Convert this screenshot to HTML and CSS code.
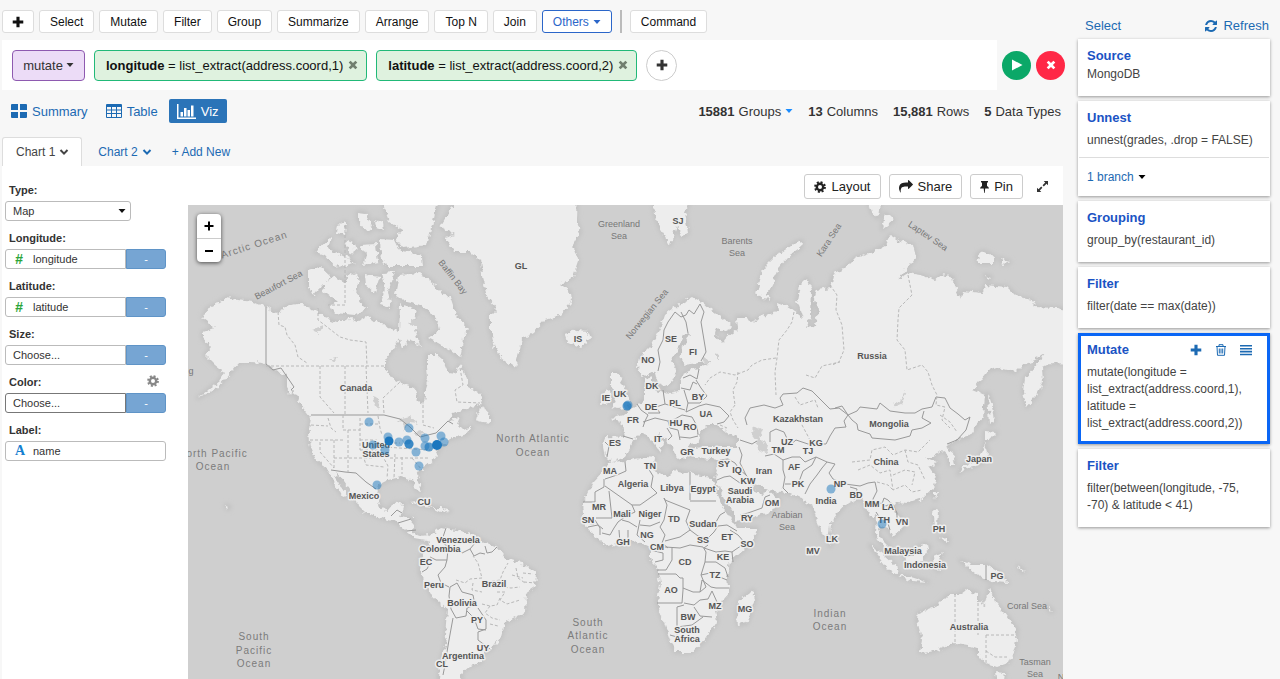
FILE: index.html
```html
<!DOCTYPE html>
<html lang="en">
<head>
<meta charset="UTF-8">
<meta name="viewport" content="width=device-width, initial-scale=1">
<title>Restaurants - Mutate</title>
<link rel="stylesheet" href="styles.css">
</head>

<body>

<!-- shared icons -->
<svg class="symbols" aria-hidden="true">
	<symbol id="plus" viewBox="0 0 10 10"><path d="M3.7 .6h2.6v3.1h3.1v2.6H6.3v3.1H3.7V6.3H.6V3.7h3.1z"/></symbol>
	<symbol id="times" viewBox="0 0 10 10"><path d="M2.6.7 5 3.1 7.4.7l1.9 1.9L6.9 5l2.4 2.4-1.9 1.9L5 6.9 2.6 9.3.7 7.4 3.1 5 .7 2.6z"/></symbol>
	<symbol id="caret" viewBox="0 0 8 4"><path d="M.5 0h7L4 4z"/></symbol>
	<symbol id="chevron" viewBox="0 0 10 8"><path d="M1.5 2 5 5.6 8.5 2" fill="none" stroke="currentColor" stroke-width="2"/></symbol>
	<symbol id="cog" viewBox="0 0 12 12"><circle cx="6" cy="6" r="3.2" fill="none" stroke="currentColor" stroke-width="2.4"/><circle cx="6" cy="6" r="4.9" fill="none" stroke="currentColor" stroke-width="2" stroke-dasharray="2 1.848"/></symbol>
</svg>

<div class="app">

<main class="main">

	<nav class="toolbar">
		<button class="btn icon" aria-label="Add"><svg class="i12"><use href="#plus"/></svg></button>
		<button class="btn">Select</button>
		<button class="btn">Mutate</button>
		<button class="btn">Filter</button>
		<button class="btn">Group</button>
		<button class="btn">Summarize</button>
		<button class="btn">Arrange</button>
		<button class="btn">Top N</button>
		<button class="btn">Join</button>
		<button class="btn active">Others <svg class="caret"><use href="#caret"/></svg></button>
		<span class="divider"></span>
		<button class="btn">Command</button>
	</nav>

	<div class="command">
		<div class="command-bar">
			<button class="verb">mutate <svg class="caret"><use href="#caret"/></svg></button>
			<div class="token"><span><b>longitude</b> = list_extract(address.coord,1)</span><button aria-label="Remove longitude"><svg class="i10"><use href="#times"/></svg></button></div>
			<div class="token"><span><b>latitude</b> = list_extract(address.coord,2)</span><button aria-label="Remove latitude"><svg class="i10"><use href="#times"/></svg></button></div>
			<button class="round add" aria-label="Add column"><svg class="i12"><use href="#plus"/></svg></button>
		</div>
		<button class="round run" aria-label="Run"><svg class="i12" viewBox="0 0 12 12"><path d="M1 .5v11L11.500 6z"/></svg></button>
		<button class="round cancel" aria-label="Cancel"><svg class="i10"><use href="#times"/></svg></button>
	</div>

	<div class="views">
		<a href="#" class="view"><svg width="16" height="14" viewBox="0 0 16 14"><path d="M0 1q0-1 1-1h6v6H0zM9 0h6q1 0 1 1v5H9zM0 8h7v6H1q-1 0-1-1zM9 8h7v5q0 1-1 1H9z"/></svg>Summary</a>
		<a href="#" class="view"><svg width="16" height="14" viewBox="0 0 16 14"><path fill-rule="evenodd" d="M1 0h14q1 0 1 1v12q0 1-1 1H1q-1 0-1-1V1q0-1 1-1zM1 3v2.500h4V3zm5 0v2.500h4V3zm5 0v2.500h4V3zM1 6.500V9h4V6.500zm5 0V9h4V6.500zm5 0V9h4V6.500zM1 10v3h4v-3zm5 0v3h4v-3zm5 0v3h4v-3z"/></svg>Table</a>
		<a href="#" class="view on"><svg width="19" height="15" viewBox="0 0 19 15"><path d="M0 0h1.500v13.500H19V15H0zM3.500 8h2.500v4.500H3.500zM7 4h2.500v8.500H7zM10.500 6h2.500v6.500h-2.500zM14 1.500h2.500v11H14z"/></svg>Viz</a>
		<ul class="stats">
			<li><b>15881</b> Groups <svg class="caret"><use href="#caret"/></svg></li>
			<li><b>13</b> Columns</li>
			<li><b>15,881</b> Rows</li>
			<li><b>5</b> Data Types</li>
		</ul>
	</div>

	<div class="tabs">
		<a href="#" class="tab on">Chart 1 <svg class="i10"><use href="#chevron"/></svg></a>
		<a href="#" class="tab">Chart 2 <svg class="i10"><use href="#chevron"/></svg></a>
		<a href="#" class="tab">+ Add New</a>
	</div>

	<section class="panel">

		<form class="settings">
			<div class="field short">
				<label for="type">Type:</label>
				<div class="control"><select id="type"><option>Map</option></select><svg class="caret"><use href="#caret"/></svg></div>
			</div>
			<div class="field">
				<label for="lon">Longitude:</label>
				<div class="control"><span class="num">#</span><select id="lon" class="with-icon"><option>longitude</option></select><button type="button">-</button></div>
			</div>
			<div class="field">
				<label for="lat">Latitude:</label>
				<div class="control"><span class="num">#</span><select id="lat" class="with-icon"><option>latitude</option></select><button type="button">-</button></div>
			</div>
			<div class="field">
				<label for="size">Size:</label>
				<div class="control"><select id="size"><option>Choose...</option></select><button type="button">-</button></div>
			</div>
			<div class="field">
				<div class="label-row"><label for="color">Color:</label><svg class="i12"><use href="#cog"/></svg></div>
				<div class="control"><select id="color" class="dark"><option>Choose...</option></select><button type="button">-</button></div>
			</div>
			<div class="field">
				<label for="label">Label:</label>
				<div class="control"><span class="chr">A</span><select id="label" class="with-icon full"><option>name</option></select></div>
			</div>
		</form>

		<div class="chart">
			<div class="actions">
				<button class="action"><svg class="i12"><use href="#cog"/></svg>Layout</button>
				<button class="action"><svg width="14" height="13" viewBox="0 128 1792 1536"><path d="M1792 640q0 26-19 45l-512 512q-19 19-45 19t-45-19-19-45v-256h-224q-98 0-175.500 6t-154 21.500-133 42.500-105.500 69.500-80 101-48.500 138.500-17.500 181q0 55 5 123 0 6 2.500 23.500t2.500 26.500q0 15-8.500 25t-23.500 10q-16 0-28-17-7-9-13-22t-13.500-30-10.500-24q-127-285-127-451 0-199 53-333 162-403 875-403h224v-256q0-26 19-45t45-19 45 19l512 512q19 19 19 45z"/></svg>Share</button>
				<button class="action"><svg width="9" height="12" viewBox="0 0 9 12"><path d="M1 0h7v1.500H7V5q1.700.8 2 2.600H5.200L4.700 12h-.5l-.5-4.400H0Q.3 5.800 2 5V1.500H1z"/></svg>Pin</button>
				<button class="expand" aria-label="Expand"><svg width="11" height="11" viewBox="0 0 11 11"><path d="M11 0v4.300L9.500 2.800 6.800 5.500l-1.200-1.200 2.600-2.700L6.700 0zM0 11V6.700l1.500 1.500 2.700-2.700 1.200 1.200-2.600 2.700L4.300 11z"/></svg></button>
			</div>

			<div class="map">
				<svg class="world" viewBox="188 205 875 474" preserveAspectRatio="xMidYMid slice" role="img" aria-label="World map">
					<defs>
						<filter id="coast">
							<feTurbulence type="fractalNoise" baseFrequency="0.2" numOctaves="2" seed="4" result="n"/>
							<feDisplacementMap in="SourceGraphic" in2="n" scale="7" xChannelSelector="R" yChannelSelector="G"/>
						</filter>
						<filter id="soft"><feGaussianBlur stdDeviation="2"/></filter>
						<g id="land">
							<!-- north and central america -->
							<path d="M228 297 238 300 253 302 266 307 275 313 288 306 300 303 308 308 318 312 325 318 336 322 345 322 352 318 358 321 368 316 376 322 384 324 392 328 398 332 402 326 408 324 409 330 401 338 393 348 385 360 385 368 391 378 401 383 415 388 418 401 423 405 425 397 425 387 428 378 427 368 427 355 437 355 443 360 448 372 455 373 460 365 465 375 468 387 478 392 483 398 480 405 467 408 453 413 448 422 455 418 460 417 457 424 463 430 472 427 467 434 450 439 446 442 440 447 436 455 430 463 421 470 417 476 421 486 420 492 416 489 413 481 401 477 388 480 378 485 376 495 380 507 388 510 393 504 404 503 402 510 400 517 413 519 412 533 421 536 428 535 432 541 426 540 415 538 405 530 396 522 381 518 365 512 358 505 356 497 345 482 335 473 339 484 347 496 344 497 335 485 328 470 316 460 310 447 308 435 311 418 303 408 293 392 285 375 275 370 263 363 251 362 240 362 231 372 218 387 198 398 218 382 225 373 215 365 205 355 211 348 203 338 203 332 215 328 203 318 207 309 215 305z"/>
							<path d="M308 270 320 266 331 276 322 285 313 296 308 285zM323 282 335 277 345 283 350 273 360 277 355 292 366 308 355 315 335 313 330 305 336 300 323 290zM365 275 380 277 375 293 366 285zM382 273 395 272 388 292 391 308 380 305 385 288zM315 252 331 237 328 248 348 258 355 263 335 267 325 255zM338 225 346 222 345 235 337 233zM358 212 366 213 373 228 368 232 358 220zM376 220 382 223 383 230 377 228zM346 244 352 240 356 250 350 254zM360 245 376 244 378 262 363 265 366 255zM380 239 395 240 400 250 422 256 423 266 386 266 381 254zM381 190 440 190 433 222 427 245 403 248 395 238 403 230 390 222 386 212z"/>
							<path d="M399 275 420 273 433 282 437 290 450 297 455 312 463 323 469 330 463 337 462 348 460 358 450 350 438 343 428 338 440 330 438 322 430 312 420 305 407 302 395 295zM400 305 417 310 413 322 420 345 408 340 403 348 399 334zM482 405 490 417 490 423 483 422 476 420 478 412zM286 377 292 385 290 395 286 388zM410 501 420 500 433 507 424 506zM432 508 441 508 450 511 440 512zM226 505l4 2-2 2z"/>
							<!-- greenland, iceland, svalbard -->
							<path d="M462 190 440 227 455 235 445 238 455 252 472 252 480 260 483 282 488 298 497 308 490 315 490 328 495 348 503 360 515 367 518 357 523 338 533 333 545 320 560 315 571 303 570 292 560 285 573 277 578 262 573 245 580 232 576 220 577 190zM565 333 577 330 588 331 591 338 580 347 568 342zM653 190 693 190 685 213 688 233 682 237 677 225 670 245 660 228 655 215z"/>
							<!-- eurasia -->
							<path d="M605 437 625 438 623 425 612 418 624 415 632 410 640 402 645 398 645 385 645 378 652 376 652 388 657 390 670 393 680 391 680 382 683 373 690 370 698 368 713 362 698 363 683 365 681 352 687 340 690 334 683 335 678 350 671 360 677 369 672 382 663 388 657 378 655 370 643 377 638 368 640 357 652 345 660 330 665 315 678 305 693 297 703 303 712 310 723 318 732 325 728 332 717 328 715 335 722 343 727 337 738 328 737 317 747 317 750 322 765 315 778 312 777 303 790 308 803 318 797 300 800 285 807 278 812 290 811 315 806 328 815 326 818 310 814 300 817 290 830 288 833 275 845 268 855 258 872 252 885 245 890 235 898 240 913 245 916 257 903 273 897 280 908 273 920 275 935 280 943 274 953 277 956 290 960 299 963 291 982 293 985 285 1007 287 1017 297 1032 300 1035 307 1057 308 1075 312 1075 364 1052 363 1042 368 1043 382 1035 398 1027 407 1023 392 1025 378 1035 367 1045 353 1035 360 1022 365 1015 372 998 368 988 370 973 390 985 395 983 418 968 437 957 440 945 447 953 453 955 465 950 465 948 455 942 450 932 457 925 457 938 463 930 467 937 477 933 488 922 498 908 503 897 502 892 508 902 520 903 528 893 537 888 528 880 525 878 535 888 545 893 554 885 548 875 535 876 515 870 518 867 510 862 497 855 500 848 502 838 513 830 523 829 535 824 537 817 520 812 503 807 505 802 497 782 492 768 490 755 483 748 480 753 490 763 495 768 490 780 500 772 512 758 515 737 522 733 513 725 500 717 483 715 478 720 460 702 458 688 455 690 449 702 447 738 447 738 438 727 433 718 425 707 425 698 435 700 442 687 445 686 458 680 460 674 451 668 442 660 433 657 436 664 444 660 452 652 441 645 434 637 436 632 445 625 457 613 462 605 457 603 447z"/>
							<path d="M612 372 618 372 622 382 630 402 628 408 617 409 612 407 615 398 612 385zM602 395 610 390 611 402 601 404zM802 241 801 248 788 257 778 268 773 283 767 295 771 300 762 299 757 293 760 280 766 265 775 256 788 248 797 242zM867 195 881 195 878 218 872 213zM885 213 894 220 882 229zM977 255 983 251 995 257 992 263 978 263zM1000 258 1010 262 1003 264zM985 275l6 2-3 3zM988 393 992 405 994 422 990 425zM985 432 997 433 992 438 985 440zM985 443 988 453 984 461 973 467 962 470 958 474 962 467 976 461 982 454zM933 492 937 492 935 500zM829 538 833 541 830 546z"/>
							<!-- africa -->
							<path d="M608 462 625 461 645 457 655 458 653 470 668 477 675 470 688 473 713 477 713 483 723 507 737 528 757 528 752 543 730 562 727 577 729 593 715 610 717 622 705 640 692 652 675 652 670 640 657 603 660 583 657 567 650 560 650 548 640 543 630 540 608 547 595 537 585 525 583 503 593 483 605 470zM753 590 755 600 747 623 738 625 737 613 740 600z"/>
							<!-- south america -->
							<path d="M428 537 441 527 471 533 481 540 498 548 505 558 521 563 536 573 535 587 526 593 525 613 505 623 501 637 490 650 481 653 481 662 468 667 461 673 463 690 438 690 440 665 445 647 448 610 433 597 420 573 421 557 430 543z"/>
							<!-- oceania -->
							<path d="M917 620 918 613 938 605 948 595 958 595 965 590 977 593 977 602 985 605 990 587 995 602 1005 613 1017 630 1015 647 1008 663 997 667 985 663 977 653 977 648 968 645 955 643 938 650 925 653 920 652 922 640zM995 672 1005 673 1003 685 997 685zM960 560 972 565 987 565 998 572 1008 583 992 582 987 580 975 573zM905 555 925 543 930 547 920 563 907 567zM870 545 882 553 895 565 897 575 887 568 877 555zM897 575 912 577 928 582 912 581zM933 557 943 553 938 562 939 571 934 566zM933 510 938 512 937 525 944 530 935 525zM940 538 948 537 948 544zM1046 605l7 6-2 1zM1018 566l6 5-2 1z"/>
						</g>
					</defs>

					<rect class="sea" x="0" y="0" width="1300" height="900"/>
					<use href="#land" class="shelf" filter="url(#soft)"/>
					<g filter="url(#coast)">
						<use href="#land" class="land"/>
						<!-- lakes and inland seas -->
						<path class="sea" d="M750 432 757 427 763 430 760 438 768 446 766 453 758 450 756 440zM398 420 410 417 418 424 408 423 404 432 402 424zM414 432l8-1 3 4-9 1zM311 330l12-4-4 8zM328 360l12-3-5 5zM372 396l6 2 1 10-4-2zM702 358l5-1 1 6-4 1zM715 353l3 1v6h-3zM893 405l8-4 5-13-3 14-7 5zM408 322l12-5 6 8-8 6z"/>
					</g>

					<path class="border" d="M266 307V364L273 370 281 368 294 387 291 390M311 415H384L400 419 410 427 420 437 436 433 448 421 453 424M331 470 345 472 356 473 366 482 376 489M391 516 397 510 402 513M398 523 411 519M407 531 416 530M446 528 443 537 445 545 457 548 462 553 470 549 475 543 481 541M448 549 447 560 436 560 430 557M447 560 445 567 438 575 441 583 449 587M450 587 457 583 462 592 473 595 475 605 467 608 466 616 456 618 451 609 449 596 450 587M478 608 486 620 486 629 478 632 478 640 490 649M467 611 474 618 478 629 486 630M453 618 449 640 447 652 445 665 443 675M485 546 487 553 492 552 497 547M470 549 474 556 480 553 485 554M422 572 427 569 430 563"/>
					<path class="border" d="M658 371 660 362 658 350 663 340 664 330 668 322 675 312 681 317 686 315 689 310 694 314 700 304 704 312 701 322 704 340 706 352 701 361M681 312 686 322 688 333M683 378 690 375 697 379 699 369M681 388 690 390 693 382 697 384M696 380 701 388 707 396 700 403 688 403 684 390M663 390 665 404 656 407 660 413 648 413M665 404 675 407 685 410M688 403 686 412 699 406 706 404 720 407 729 416 724 422 717 424M637 404 641 410 648 415 645 421 643 427M643 422 655 418 668 421 675 419 682 415 692 417 697 426 698 434M668 421 670 428 678 430 680 440M680 437 690 438 698 436M667 428 672 436 668 440M605 442 609 446 607 457M623 436 633 439M747 425 745 418 750 408 764 405 775 408 783 405 780 398 783 394 797 393 803 388 812 391 822 401 830 409 839 408 848 415 844 421 846 427 835 428 830 436 826 444 808 444 796 440 790 445 784 432 776 429 770 432 770 442M740 440 752 444 757 441M739 447 742 455 740 463 746 475 752 482M765 456 774 454 783 460 783 470 785 477 783 488 788 493M783 460 792 457 800 457 805 462 816 457 812 465 803 471 800 479 797 484 785 484M816 457 827 462 822 468 817 475 810 484 805 494M720 460 728 459 735 463 740 470 746 475M717 480 724 477 730 476 740 483 747 484M740 515 748 513 762 508 765 497 770 495M835 408 842 406 848 415 857 411 860 407 877 409 880 403 890 411 905 413 915 413 922 409 932 407 936 397 945 398 950 408 958 414 965 420 970 417 966 430 957 440 947 444M848 415 852 420 857 424 858 430 870 434 872 438 895 440 910 436 912 430 922 428 931 423 922 418 924 411M827 462 835 464 829 473 833 479 845 484 860 486 868 483 875 482 877 491 873 499 873 507 881 503 886 506 892 503 897 513 897 521M876 512 880 518 887 520 890 530M850 487 857 489 855 499 850 497M882 504 884 498 888 500 895 508M986 565V580M905 556 914 555 920 549"/>
					<path class="border" d="M625 462 626 471 617 475 605 479M604 479V487L595 492V502H583M605 486 632 505 640 505 657 493 651 487 653 476 648 468M609 491 612 518H596M632 505 635 512 626 516 618 522 614 528 610 535 602 533M690 472V500M690 501H716M664 498 665 500 690 510M664 498 667 505 664 520 660 527 665 535 662 543 668 548M690 510 686 521 690 530 680 537 665 541M690 530 698 536 708 538 714 532 718 526M713 528 716 522 720 515 725 512M708 545 704 548 716 552 725 551 732 552 733 562M732 552 745 543 738 535 730 530M718 526 727 525 737 531M640 520 637 535 645 542M640 525 650 526 660 522M622 520 629 522 637 527M620 543 619 530M628 541 628 530M665 547 680 548 690 545 703 547M672 548 672 560 666 570 657 570M650 550 663 553 663 560 655 562M703 547 706 552 705 562 701 575 706 587 700 592M705 562 716 562M701 575 710 573 727 580M658 574 676 574 680 578 683 578V590L682 603 657 603M683 588 693 592 700 592 702 580 711 587 716 588 729 588M684 603 694 605 700 600 708 599 712 591 717 602 708 609M694 607 700 616 712 617M677 627V607L684 605M677 627 692 625 703 617M677 627V637L670 635M716 562 725 568 728 577M595 520 600 528 600 535M588 527 598 525 603 529M594 524 583 523"/>
					<path class="region" d="M278 312 279 325 285 327 287 335 295 345 298 357 307 363M318 308V320L322 323 340 337 350 340 366 342 367 366M266 366H385M320 366V397L334 413M345 366V415M366 366 368 413M384 413 383 398 400 382M460 368 463 385 455 390 457 402 480 403M423 405V425L434 428M328 418 331 428 336 432M311 425 328 426M343 415V430M343 430H360M360 418V450M360 424H380M360 440H377M378 416 380 428 382 435M310 440H345M320 442V452L334 468M334 440V470M348 430V472M334 458H372M360 450H382M363 455 366 465 384 467M382 455 388 466 387 478M395 454 394 478M402 457V474M384 443H400M384 447 430 450M390 458H430M412 458 422 470M345 225V305H328"/>
					<path class="region" d="M794 312 792 322 787 330 779 340 777 358 775 372 776 395M776 358 762 360 752 365 748 370 735 375 720 372 710 378 705 385M738 372 737 382 733 390 735 405M806 375 815 378 822 366 840 362M830 285 837 295 836 310 842 325 844 350 839 362 832 365M908 275 912 295 899 308 898 320 897 340 905 350 907 370 922 365 928 372 932 385 937 395 936 405 945 407 942 420 950 428M795 397 800 405 815 400 818 408M800 415 802 425 810 440M852 462 870 460 872 450 885 447 893 455 905 450 918 452 930 440M858 470 870 465 880 473 890 470 893 490 905 485 912 492 922 490M905 450 908 462 918 465 925 480M893 475 905 470 915 472 912 485M877 482 888 485 893 490M940 415 950 422 957 432M955 594V644M978 603V635M986 635 1016 635M986 635V663M986 651 995 657 1007 657M456 580 465 583 470 579 482 578 478 563 473 556M482 583 500 580 503 572 508 563M473 583 472 590 482 592M500 580 502 587 511 588 520 587M497 592 505 592 500 600 507 604 520 600M482 604 490 606 497 605 500 598M490 606 485 613 492 618 500 620M516 568 518 578 525 583M523 573 533 574M512 575 523 578M524 582 535 583M490 624 498 626M735 405 730 412 733 420 738 428M720 425 727 428"/>

					<g class="ocean">
						<text x="254" y="248" transform="rotate(-18 254 244)">Arctic Ocean</text>
						<text x="533" y="442">North Atlantic</text><text x="533" y="456">Ocean</text>
						<text x="213" y="457">North Pacific</text><text x="213" y="470">Ocean</text>
						<text x="254" y="640">South</text><text x="254" y="654">Pacific</text><text x="254" y="667">Ocean</text>
						<text x="588" y="626">South</text><text x="588" y="639">Atlantic</text><text x="588" y="653">Ocean</text>
						<text x="830" y="617">Indian</text><text x="830" y="630">Ocean</text>
					</g>
					<g class="sea-name">
						<text x="278" y="288" transform="rotate(-28 278 284)">Beaufort Sea</text>
						<text x="453" y="280" transform="rotate(52 453 277)">Baffin Bay</text>
						<text x="647" y="317" transform="rotate(-51 647 314)">Norwegian Sea</text>
						<text x="829" y="243" transform="rotate(-57 829 240)">Kara Sea</text>
						<text x="928" y="239" transform="rotate(34 928 236)">Laptev Sea</text>
						<text x="619" y="227">Greenland</text><text x="619" y="239">Sea</text>
						<text x="737" y="244">Barents</text><text x="737" y="256">Sea</text>
						<text x="787" y="518">Arabian</text><text x="787" y="530">Sea</text>
						<text x="1027" y="609">Coral Sea</text>
						<text x="1035" y="665">Tasman</text><text x="1035" y="677">Sea</text>
						<text x="191" y="374">g</text><text x="1061" y="680">N</text>
					</g>
					<g class="country">
						<text x="356" y="391">Canada</text><text x="376" y="448">United</text><text x="376" y="457">States</text>
						<text x="364" y="499">Mexico</text><text x="424" y="505">CU</text><text x="521" y="269">GL</text><text x="578" y="342">IS</text>
						<text x="458" y="543">Venezuela</text><text x="440" y="552">Colombia</text><text x="426" y="565">EC</text><text x="434" y="588">Peru</text>
						<text x="494" y="587">Brazil</text><text x="462" y="606">Bolivia</text><text x="477" y="623">PY</text><text x="483" y="651">UY</text>
						<text x="463" y="659">Argentina</text><text x="442" y="667">CL</text>
						<text x="678" y="224">SJ</text><text x="671" y="342">SE</text><text x="693" y="355">FI</text><text x="648" y="363">NO</text>
						<text x="652" y="389">DK</text><text x="620" y="397">UK</text><text x="606" y="401">IE</text><text x="651" y="410">DE</text>
						<text x="675" y="406">PL</text><text x="698" y="400">BY</text><text x="706" y="417">UA</text><text x="633" y="423">FR</text>
						<text x="676" y="426">HU</text><text x="690" y="430">RO</text><text x="658" y="442">IT</text><text x="615" y="446">ES</text>
						<text x="687" y="455">GR</text><text x="716" y="454">Turkey</text><text x="724" y="467">SY</text><text x="737" y="473">IQ</text>
						<text x="748" y="484">KW</text><text x="764" y="474">Iran</text><text x="778" y="453">TM</text><text x="787" y="445">UZ</text>
						<text x="816" y="446">KG</text><text x="808" y="454">TJ</text><text x="794" y="470">AF</text><text x="798" y="487">PK</text>
						<text x="798" y="422">Kazakhstan</text><text x="872" y="359">Russia</text><text x="889" y="427">Mongolia</text><text x="886" y="465">China</text>
						<text x="979" y="462">Japan</text><text x="840" y="487">NP</text><text x="826" y="504">India</text><text x="856" y="498">BD</text>
						<text x="872" y="507">MM</text><text x="888" y="510">LA</text><text x="884" y="523">TH</text><text x="902" y="525">VN</text>
						<text x="939" y="532">PH</text><text x="832" y="542">LK</text><text x="813" y="554">MV</text><text x="903" y="554">Malaysia</text>
						<text x="925" y="568">Indonesia</text><text x="997" y="579">PG</text><text x="969" y="630">Australia</text>
						<text x="610" y="474">MA</text><text x="633" y="487">Algeria</text><text x="650" y="469">TN</text><text x="672" y="491">Libya</text>
						<text x="703" y="492">Egypt</text><text x="740" y="494">Saudi</text><text x="740" y="503">Arabia</text><text x="772" y="506">OM</text>
						<text x="747" y="521">RY</text><text x="599" y="510">MR</text><text x="588" y="523">SN</text><text x="622" y="517">Mali</text>
						<text x="650" y="517">Niger</text><text x="674" y="522">TD</text><text x="703" y="527">Sudan</text><text x="623" y="545">GH</text>
						<text x="647" y="538">NG</text><text x="657" y="550">CM</text><text x="703" y="543">SS</text><text x="727" y="540">ET</text>
						<text x="747" y="547">SO</text><text x="685" y="565">CD</text><text x="723" y="560">KE</text><text x="715" y="578">TZ</text>
						<text x="671" y="593">AO</text><text x="715" y="609">MZ</text><text x="688" y="620">BW</text><text x="745" y="612">MG</text>
						<text x="687" y="633">South</text><text x="687" y="642">Africa</text>
					</g>

					<g class="dots">
						<circle cx="369" cy="422" r="4.500"/><circle cx="409" cy="428" r="4.500"/><circle cx="388" cy="437" r="4.500"/>
						<circle cx="373" cy="445" r="4.500"/><circle cx="385" cy="450" r="4.500"/><circle cx="399" cy="442" r="4.500"/>
						<circle cx="407" cy="440" r="4.500"/><circle cx="409" cy="444" r="4.500"/><circle cx="425" cy="438" r="4.500"/>
						<circle cx="441" cy="436" r="4.500"/><circle cx="444" cy="442" r="4.500"/><circle cx="416" cy="452" r="4.500"/>
						<circle cx="419" cy="466" r="4.500"/><circle cx="377" cy="485" r="4.500"/><circle cx="425" cy="446" r="4.500"/>
						<circle cx="831" cy="489" r="4.500"/><circle cx="882" cy="524" r="4.500"/><circle cx="628" cy="405" r="4.500"/>
						<circle class="solid" cx="389" cy="441" r="4.500"/><circle class="dense" cx="409" cy="444" r="4.500"/>
						<circle class="dense" cx="429" cy="447" r="4.500"/><circle class="solid" cx="437" cy="445" r="5"/>
						<circle class="dense" cx="627" cy="406" r="4.500"/>
					</g>
				</svg>
				<div class="zoom">
					<button aria-label="Zoom in"><svg class="i10"><path d="M4 .5h2V4h3.500v2H6v3.500H4V6H.5V4H4z"/></svg></button>
					<button aria-label="Zoom out"><svg class="i10"><path d="M1 4h8v2H1z"/></svg></button>
				</div>
			</div>
		</div>
	</section>
</main>

<aside class="steps">
	<div class="steps-head">
		<a href="#">Select</a>
		<a href="#"><svg width="12" height="12" viewBox="0 0 1536 1536"><path d="M1511 928q0 5-1 7-64 268-268 434.500t-478 166.500q-146 0-282.500-55t-243.500-157l-129 129q-19 19-45 19t-45-19-19-45v-448q0-26 19-45t45-19h448q26 0 45 19t19 45-19 45l-137 137q71 66 161 102t187 36q134 0 250-65t186-179q11-17 53-117 8-23 30-23h192q13 0 22.500 9.500t9.500 22.500zm25-800v448q0 26-19 45t-45 19h-448q-26 0-45-19t-19-45 19-45l138-138q-148-137-349-137-134 0-250 65t-186 179q-11 17-53 117-8 23-30 23h-199q-13 0-22.500-9.500t-9.500-22.500v-7q65-268 270-434.500t480-166.500q146 0 284 55.500t245 156.500l130-129q19-19 45-19t45 19 19 45z"/></svg>Refresh</a>
	</div>

	<div class="step source"><h3>Source</h3><p>MongoDB</p></div>
	<div class="step branched">
		<h3>Unnest</h3>
		<p>unnest(grades, .drop = FALSE)</p>
		<a href="#" class="branch">1 branch <svg class="caret"><use href="#caret"/></svg></a>
	</div>
	<div class="step"><h3>Grouping</h3><p>group_by(restaurant_id)</p></div>
	<div class="step"><h3>Filter</h3><p>filter(date == max(date))</p></div>
	<div class="step selected">
		<div class="step-head">
			<h3>Mutate</h3>
			<button aria-label="Add step"><svg class="i12"><use href="#plus"/></svg></button>
			<button aria-label="Delete step"><svg class="i12" viewBox="0 0 12 12"><path d="M1 2.500h10M4 2.500V.7h4v1.800M2 2.500l.5 8.800h7l.5-8.800M4.300 4.500v5M6 4.500v5M7.700 4.500v5" fill="none" stroke="currentColor"/></svg></button>
			<button aria-label="Step menu"><svg class="i12" viewBox="0 0 12 12"><path d="M0 1h12v1.600H0zM0 3.900h12v1.600H0zM0 6.800h12v1.600H0zM0 9.700h12v1.600H0z"/></svg></button>
		</div>
		<p>mutate(longitude = list_extract(address.coord,1), latitude = list_extract(address.coord,2))</p>
	</div>
	<div class="step"><h3>Filter</h3><p>filter(between(longitude, -75, -70) &amp; latitude &lt; 41)</p></div>
</aside>

</div>

</body>
</html>
```

FILE: styles.css
```css
* {
	box-sizing: border-box;
}

body {
	margin: 0;
	background-color: #f7f7f7;
	color: #333;
	font-family: "Liberation Sans", Arial, sans-serif;
	font-size: 13px;
}

button, select {
	font-family: inherit;
	color: inherit;
	cursor: pointer;
}

button {
	display: inline-flex;
	align-items: center;
	justify-content: center;
	padding: 0;
	border: none;
	background: none;
}

a {
	color: #1c6ab3;
	text-decoration: none;
}

svg {
	fill: currentColor;
	flex: none;
}

.symbols {
	position: absolute;
	width: 0;
	height: 0;
}

.i10 { width: 10px; height: 10px; }
.i12 { width: 12px; height: 12px; }
.caret { width: 8px; height: 4px; }

.app {
	display: grid;
	grid-template-columns: minmax(0, 1fr) 215px;
	min-height: 100vh;
}

.main {
	display: flex;
	flex-direction: column;
	padding-left: 2px;
}

/* toolbar */
.toolbar {
	display: flex;
	gap: 5px;
	padding: 10px 0 7px;
}

.btn {
	height: 23px;
	padding: 0 10px;
	gap: 4px;
	border: 1px solid #ddd;
	border-radius: 3px;
	background-color: #fff;
	color: #111;
	font-size: 12px;
}

.btn.icon {
	padding: 0 9px;
}

.btn.active {
	border-color: #2b66c9;
	color: #2b66c9;
}

.divider {
	width: 2px;
	margin: 0 3px;
	background-color: #bbb;
}

/* command line */
.command {
	display: flex;
	align-items: center;
	gap: 5px;
}

.command-bar {
	flex: 1;
	display: flex;
	align-items: center;
	gap: 9px;
	height: 50px;
	padding-left: 10px;
	background-color: #fff;
}

.verb, .token {
	display: flex;
	align-items: center;
	height: 31px;
	border: 1px solid #8e5ab0;
	border-radius: 4px;
	font-size: 13px;
	white-space: nowrap;
}

.verb {
	width: 73px;
	gap: 3px;
	background-color: #ecdcf7;
}

.token {
	gap: 5px;
	padding: 0 8px 0 11px;
	border-color: #21b978;
	background-color: #dff2df;
	color: #111;
}

.token button {
	color: #71806f;
}

.round {
	width: 29px;
	height: 29px;
	border-radius: 50%;
	color: #fff;
}

.round.add {
	width: 31px;
	height: 31px;
	border: 1px solid #ccc;
	color: #333;
}

.round.run {
	background-color: #0ba868;
}

.round.cancel {
	background-color: #ff2846;
}

/* view switch */
.views {
	display: flex;
	align-items: center;
	gap: 4px;
	padding: 9px 4px 0 2px;
}

.view {
	display: flex;
	align-items: center;
	gap: 5px;
	height: 24px;
	padding: 0 7px;
}

.view.on {
	padding: 0 8px;
	border-radius: 2px;
	background-color: #2b74b8;
	color: #fff;
}

.stats {
	display: flex;
	gap: 15px;
	margin: 0 0 0 auto;
	padding: 0;
	list-style: none;
}

.stats li {
	display: flex;
	align-items: center;
	gap: 4px;
}

.stats .caret {
	color: #1a8cff;
}

/* chart tabs */
.tabs {
	display: flex;
	margin: 14px 2px 0 0;
}

.tab {
	display: flex;
	align-items: center;
	gap: 4px;
	height: 29px;
	padding: 0 4px 0 16px;
	font-size: 12px;
}

.tab.on {
	padding: 0 12px 0 13px;
	border: 1px solid #ddd;
	border-bottom: none;
	border-radius: 3px 3px 0 0;
	background-color: #fff;
	color: #444;
}

.panel {
	flex: 1;
	display: flex;
	margin-right: 2px;
	background-color: #fff;
}

/* chart settings */
.settings {
	width: 186px;
	padding: 17px 22px 0 3px;
}

.field {
	margin-bottom: 10px;
}

.field label {
	display: block;
	margin-left: 4px;
	font-size: 11px;
	font-weight: bold;
	line-height: 14px;
}

.label-row {
	display: flex;
	justify-content: space-between;
	padding-right: 7px;
	color: #888;
}

.label-row label {
	color: #333;
}

.control {
	display: flex;
	position: relative;
	margin-top: 4px;
}

.short .control {
	width: 126px;
}

.control select {
	flex: 1;
	min-width: 0;
	height: 20px;
	padding: 0 7px;
	appearance: none;
	border: 1px solid #bbb;
	border-radius: 3px 0 0 3px;
	background-color: #fff;
	font-size: 11px;
}

.control select.with-icon {
	padding-left: 27px;
}

.control select.dark {
	border-color: #777;
}

.control select.full, .short select {
	border-radius: 3px;
}

.control button {
	width: 40px;
	border: 1px solid #5f94c7;
	border-radius: 0 3px 3px 0;
	background-color: #76a5d3;
	color: #fff;
	font-size: 11px;
}

.control .caret {
	position: absolute;
	right: 5px;
	top: 8px;
	color: #111;
}

.num, .chr {
	position: absolute;
	left: 10px;
	top: 2px;
	color: #2ca53a;
	font-size: 14px;
	font-weight: bold;
	font-style: italic;
	line-height: 16px;
}

.chr {
	color: #1580d0;
	font-family: "Liberation Serif", serif;
	font-style: normal;
}

/* chart area */
.chart {
	flex: 1;
	display: flex;
	flex-direction: column;
	min-width: 0;
}

.actions {
	display: flex;
	justify-content: flex-end;
	gap: 8px;
	padding: 8px 10px 6px 0;
}

.action {
	height: 25px;
	padding: 0 9px;
	gap: 5px;
	border: 1px solid #ccc;
	border-radius: 3px;
	color: #222;
	font-size: 13px;
}

.expand {
	width: 22px;
}

.map {
	flex: 1;
	position: relative;
	min-height: 300px;
	overflow: hidden;
}

.world {
	position: absolute;
	width: 100%;
	height: 100%;
}

.sea {
	fill: #cfcfcf;
}

.land {
	fill: #ededed;
}

.shelf {
	fill: #c2c2c2;
	stroke: #c2c2c2;
	stroke-width: 4;
	stroke-linejoin: round;
}

.border, .region {
	fill: none;
	stroke: #999;
	stroke-linejoin: round;
}

.region {
	stroke: #b8b8b8;
	stroke-dasharray: 3 2;
}

.world text {
	text-anchor: middle;
}

.ocean {
	fill: #7b7b7b;
	font-size: 10px;
	letter-spacing: 1px;
}

.sea-name {
	fill: #777;
	font-size: 9px;
}

.country {
	fill: #555;
	font-size: 9px;
	font-weight: bold;
	paint-order: stroke;
	stroke: #ededed;
	stroke-width: 3;
	stroke-linejoin: round;
}

.dots {
	fill: #1c77be;
	fill-opacity: 0.5;
}

.dots .dense {
	fill-opacity: 0.7;
}

.dots .solid {
	fill-opacity: 1;
}

.zoom {
	position: absolute;
	left: 9px;
	top: 9px;
	width: 24px;
	border-radius: 4px;
	background-color: #fff;
	box-shadow: 0 1px 4px rgba(0,0,0,0.65);
}

.zoom button {
	display: flex;
	width: 24px;
	height: 24px;
	color: #000;
}

.zoom button + button {
	border-top: 1px solid #ccc;
}

/* steps */
.steps {
	padding: 0 10px 0 13px;
}

.steps-head {
	display: flex;
	align-items: center;
	justify-content: space-between;
	height: 39px;
	padding: 12px 1px 0 7px;
}

.steps-head a {
	display: flex;
	align-items: center;
	gap: 6px;
}

.step {
	margin-bottom: 5px;
	padding: 8px 9px 13px;
	background-color: #fff;
	box-shadow: 0 1px 3px rgba(0,0,0,0.4);
}

.step h3 {
	margin: 0;
	color: #1a53c4;
	font-size: 13px;
	line-height: 18px;
}

.step p {
	margin: 5px 0 0;
	color: #444;
	font-size: 12px;
	line-height: 17px;
}

.step.source p {
	margin-top: 1px;
}

.step.branched {
	padding-bottom: 0;
}

.branch {
	display: flex;
	align-items: center;
	gap: 4px;
	height: 39px;
	margin: 8px -8px 0;
	padding-left: 8px;
	border-top: 1px solid #ddd;
	font-size: 12px;
}

.branch .caret {
	color: #000;
}

.step.selected {
	padding-bottom: 12px;
	outline: 3px solid #0a66f5;
	outline-offset: -3px;
}

.step-head {
	display: flex;
	align-items: center;
	gap: 13px;
	padding-right: 9px;
}

.step-head h3 {
	margin-right: auto;
}

.step-head button {
	color: #1c6ab3;
}
```
